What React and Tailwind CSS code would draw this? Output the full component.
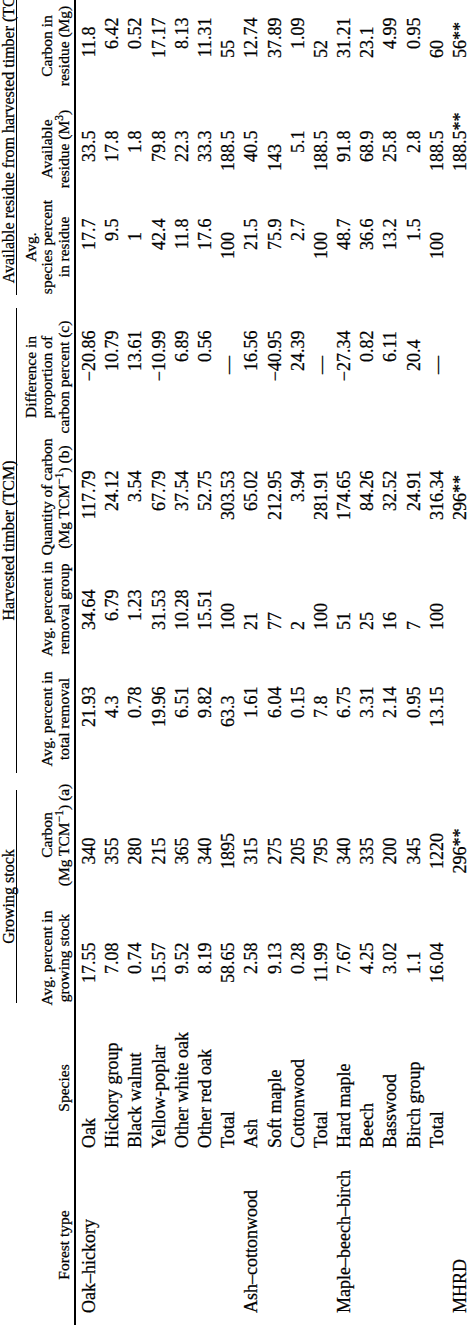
import React from "react";

// table is drawn upright (1325 x 474) and turned a quarter turn to the left
const rows = [
  ["Oak–hickory", "Oak", "17.55", "340", "21.93", "34.64", "117.79", "−20.86", "17.7", "33.5", "11.8"],
  ["", "Hickory group", "7.08", "355", "4.3", "6.79", "24.12", "10.79", "9.5", "17.8", "6.42"],
  ["", "Black walnut", "0.74", "280", "0.78", "1.23", "3.54", "13.61", "1", "1.8", "0.52"],
  ["", "Yellow-poplar", "15.57", "215", "19.96", "31.53", "67.79", "−10.99", "42.4", "79.8", "17.17"],
  ["", "Other white oak", "9.52", "365", "6.51", "10.28", "37.54", "6.89", "11.8", "22.3", "8.13"],
  ["", "Other red oak", "8.19", "340", "9.82", "15.51", "52.75", "0.56", "17.6", "33.3", "11.31"],
  ["", "Total", "58.65", "1895", "63.3", "100", "303.53", "—", "100", "188.5", "55"],
  ["Ash–cottonwood", "Ash", "2.58", "315", "1.61", "21", "65.02", "16.56", "21.5", "40.5", "12.74"],
  ["", "Soft maple", "9.13", "275", "6.04", "77", "212.95", "−40.95", "75.9", "143", "37.89"],
  ["", "Cottonwood", "0.28", "205", "0.15", "2", "3.94", "24.39", "2.7", "5.1", "1.09"],
  ["", "Total", "11.99", "795", "7.8", "100", "281.91", "—", "100", "188.5", "52"],
  ["Maple–beech–birch", "Hard maple", "7.67", "340", "6.75", "51", "174.65", "−27.34", "48.7", "91.8", "31.21"],
  ["", "Beech", "4.25", "335", "3.31", "25", "84.26", "0.82", "36.6", "68.9", "23.1"],
  ["", "Basswood", "3.02", "200", "2.14", "16", "32.52", "6.11", "13.2", "25.8", "4.99"],
  ["", "Birch group", "1.1", "345", "0.95", "7", "24.91", "20.4", "1.5", "2.8", "0.95"],
  ["", "Total", "16.04", "1220", "13.15", "100", "316.34", "—", "100", "188.5", "60"],
  ["MHRD", "", "", "296**", "", "", "296**", "", "", "188.5**", "56**"],
];

const dataCols = [
  { type: "left", cls: "w-[160px] pl-[12px]" },
  { type: "left", cls: "w-[154px] pl-[17px]" },
  { type: "dec", cls: "w-[106px]", iw: "w-[46px]" },
  { type: "center", cls: "w-[108px]" },
  { type: "dec", cls: "w-[124px]", iw: "w-[88px]" },
  { type: "dec", cls: "w-[128px]", iw: "w-[61px]", intCls: "pl-[43px]" },
  { type: "dec", cls: "w-[96px]", iw: "w-[52px]" },
  { type: "dec", cls: "w-[144px]", iw: "w-[96px]", dashCls: "pl-[75px]" },
  { type: "dec", cls: "w-[116px]", iw: "w-[73px]" },
  { type: "dec", cls: "w-[80px]", iw: "w-[45px]" },
  { type: "dec", cls: "w-[120px]", iw: "w-[69px]" },
];

const headCols = [
  { cls: "w-[160px]", lines: ["Forest type"] },
  { cls: "w-[154px]", lines: ["Species"] },
  { cls: "w-[106px]", lines: ["Avg. percent in", "growing stock"] },
  {
    cls: "w-[140px]",
    lines: [
      "Carbon",
      <>
        (Mg TCM<sup>−1</sup>) (a)
      </>,
    ],
  },
  { cls: "w-[92px]", lines: ["Avg. percent in", "total removal"] },
  { cls: "w-[128px]", lines: ["Avg. percent in", "removal group"] },
  {
    cls: "w-[96px]",
    lines: [
      "Quantity of carbon",
      <>
        (Mg TCM<sup>−1</sup>) (b)
      </>,
    ],
  },
  { cls: "w-[144px]", lines: ["Difference in", "proportion of", "carbon percent (c)"] },
  { cls: "w-[116px]", lines: ["Avg.", "species percent", "in residue"] },
  {
    cls: "w-[80px]",
    lines: [
      "Available",
      <>
        residue (M<sup>3</sup>)
      </>,
    ],
  },
  { cls: "w-[126px]", lines: ["Carbon in", "residue (Mg)"] },
];

const Cell = ({ col, value }) => {
  if (col.type === "left") {
    return <div className={`${col.cls} shrink-0 whitespace-nowrap`}>{value}</div>;
  }
  if (col.type === "center") {
    return <div className={`${col.cls} shrink-0 text-center whitespace-nowrap`}>{value}</div>;
  }
  if (value === "—") {
    return <div className={`${col.cls} shrink-0 ${col.dashCls}`}>—</div>;
  }
  const m = value.match(/^([−\d]*)(.*)$/);
  const whole = m ? m[1] : value;
  const rest = m ? m[2] : "";
  if (col.intCls && rest === "" && value !== "") {
    return <div className={`${col.cls} shrink-0 ${col.intCls}`}>{value}</div>;
  }
  return (
    <div className={`${col.cls} shrink-0 flex whitespace-nowrap`}>
      <span className={`${col.iw} shrink-0 text-right`}>{whole}</span>
      <span>{rest}</span>
    </div>
  );
};

export default function App() {
  return (
    <div className="w-[474px] h-[1325px] overflow-hidden bg-white">
      <div className="w-[1325px] h-[474px] origin-top-left -rotate-90 translate-y-[1325px] overflow-hidden bg-white text-black font-['Liberation_Serif','Times_New_Roman',serif] text-[18px] [-webkit-text-stroke:0.25px_#000]">
        {/* group headings */}
        <div className="flex h-[17px] leading-[17px] text-[16px]">
          <div className="w-[322px] shrink-0" />
          <div className="w-[213px] shrink-0 flex justify-center border-b border-black whitespace-nowrap">
            Growing stock
          </div>
          <div className="w-[17px] shrink-0" />
          <div className="w-[465px] shrink-0 flex justify-center border-b border-black whitespace-nowrap">
            Harvested timber (TCM)
          </div>
          <div className="w-[13px] shrink-0" />
          <div className="w-[330px] shrink-0 flex justify-center border-b border-black whitespace-nowrap">
            Available residue from harvested timber (TCM)
          </div>
        </div>

        {/* column headings */}
        <div className="flex h-[59px] border-b-2 border-black pb-[2px] leading-[16.5px] text-[15.5px]">
          {headCols.map((h, i) => (
            <div key={i} className={`${h.cls} shrink-0 flex flex-col items-center justify-end`}>
              {h.lines.map((l, j) => (
                <div key={j} className="whitespace-nowrap">
                  {l}
                </div>
              ))}
            </div>
          ))}
        </div>

        {/* body */}
        <div className="pt-[2px]">
          {rows.map((r, i) => (
            <div key={i} className="flex h-[23.2px] leading-[23.2px]">
              {r.map((v, j) => (
                <Cell key={j} col={dataCols[j]} value={v} />
              ))}
            </div>
          ))}
        </div>
      </div>
    </div>
  );
}
